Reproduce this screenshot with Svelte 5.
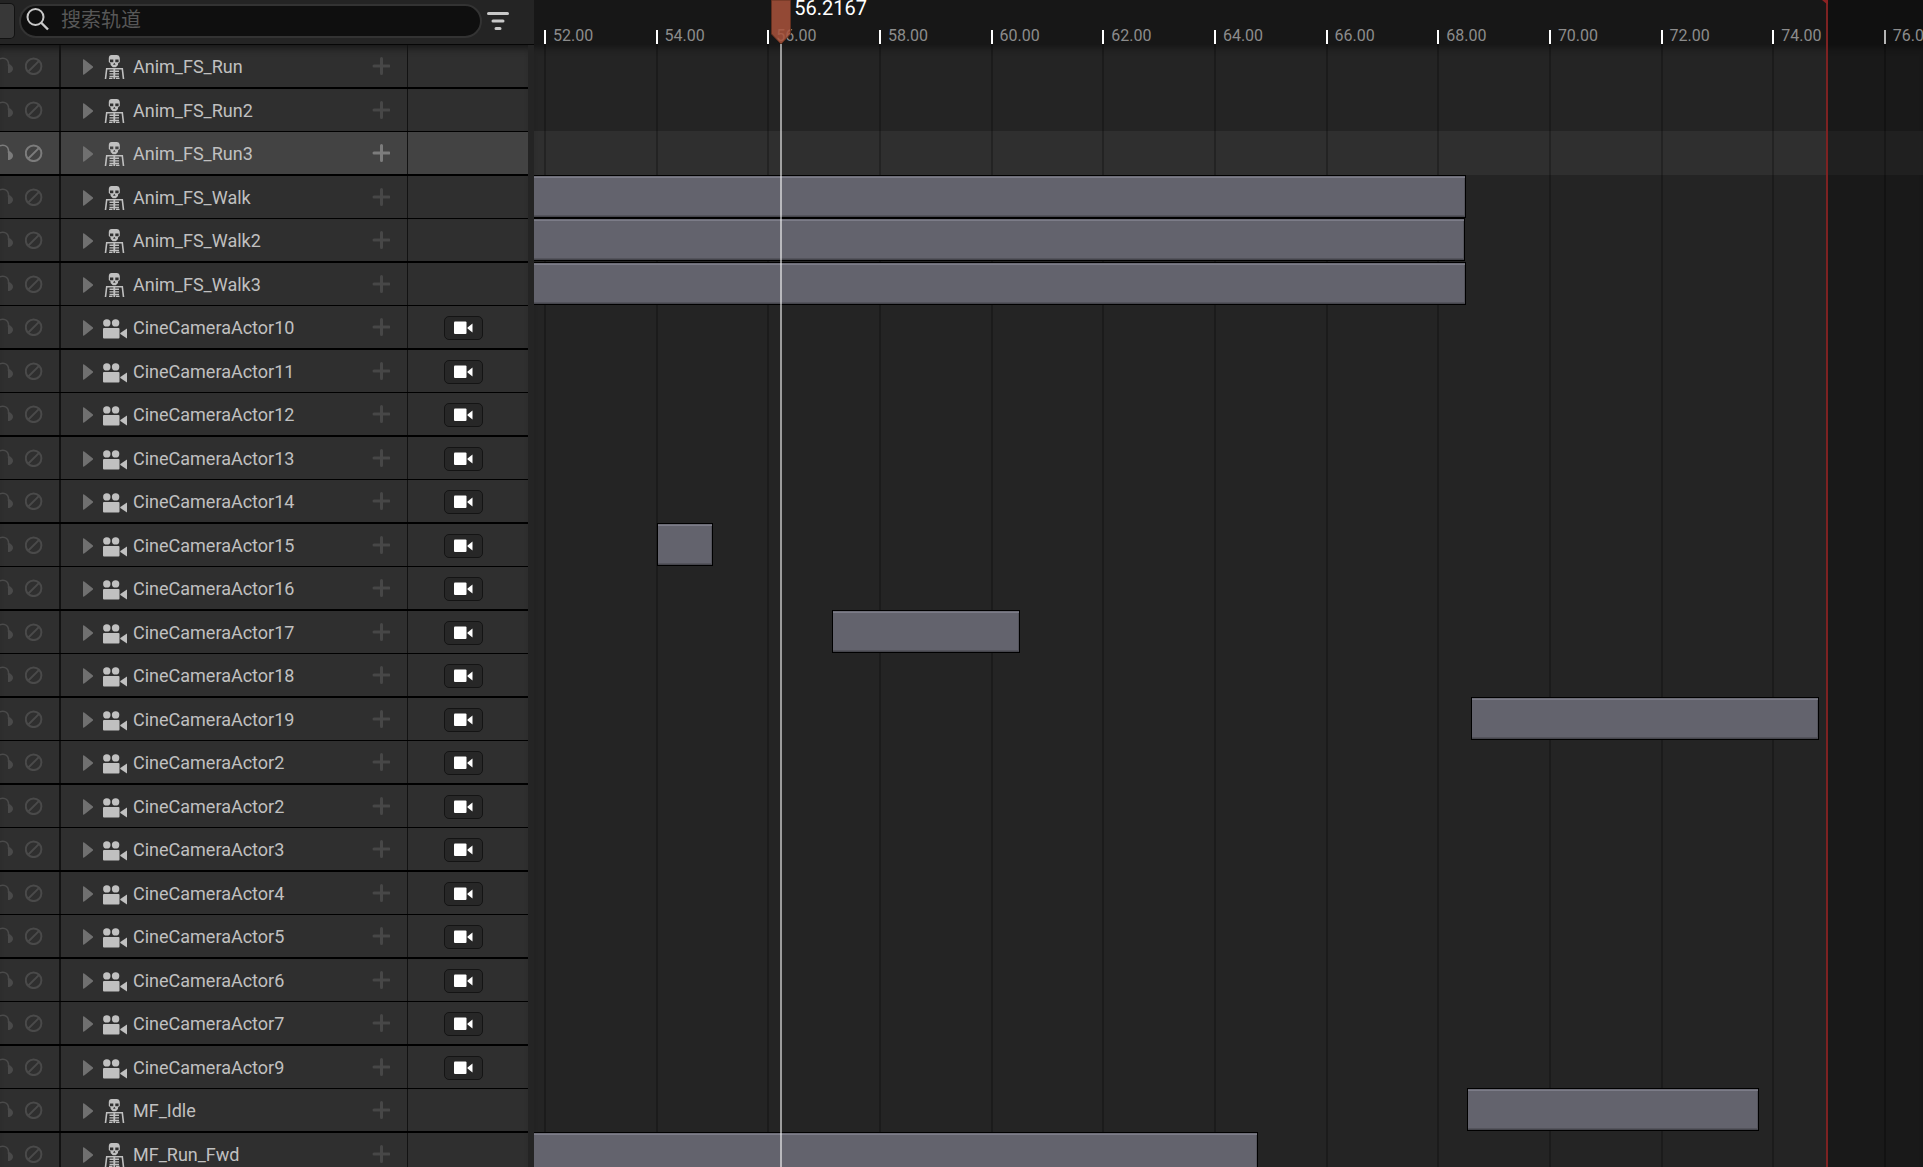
<script>
  const tracks = [
    ...["Anim_FS_Run", "Anim_FS_Run2", "Anim_FS_Run3"].map((name) => ({ name, kind: "anim" })),
    { name: "Anim_FS_Walk", kind: "anim", from: 50, to: 68.52 },
    { name: "Anim_FS_Walk2", kind: "anim", from: 50, to: 68.5 },
    { name: "Anim_FS_Walk3", kind: "anim", from: 50, to: 68.52 },
    { name: "CineCameraActor10", kind: "camera" },
    { name: "CineCameraActor11", kind: "camera" },
    { name: "CineCameraActor12", kind: "camera" },
    { name: "CineCameraActor13", kind: "camera" },
    { name: "CineCameraActor14", kind: "camera" },
    { name: "CineCameraActor15", kind: "camera", from: 54.02, to: 55.03 },
    { name: "CineCameraActor16", kind: "camera" },
    { name: "CineCameraActor17", kind: "camera", from: 57.16, to: 60.53 },
    { name: "CineCameraActor18", kind: "camera" },
    { name: "CineCameraActor19", kind: "camera", from: 68.6, to: 74.84 },
    { name: "CineCameraActor2", kind: "camera" },
    { name: "CineCameraActor2", kind: "camera" },
    { name: "CineCameraActor3", kind: "camera" },
    { name: "CineCameraActor4", kind: "camera" },
    { name: "CineCameraActor5", kind: "camera" },
    { name: "CineCameraActor6", kind: "camera" },
    { name: "CineCameraActor7", kind: "camera" },
    { name: "CineCameraActor9", kind: "camera" },
    { name: "MF_Idle", kind: "anim", from: 68.54, to: 73.76 },
    { name: "MF_Run_Fwd", kind: "anim", from: 50, to: 64.79 },
  ];

  // visible range of the timeline, in seconds
  const viewStart = 51.822;
  const viewSpan = 24.879;
  const rangeEnd = 75;
  const playhead = 56.2167;

  const ticks = [];
  for (let t = 52; t <= 76; t += 2) ticks.push(t);

  let selected = $state(2);
  let query = $state("");

  const pos = (t) => ((t - viewStart) / viewSpan) * 100;
  const clipLeft = (track) => Math.max(pos(track.from), 0);
  const clipWidth = (track) => pos(track.to) - clipLeft(track);
</script>

<div class="sequencer">
  <div class="outliner">
    <div class="toolbar">
      <button class="add-track" aria-label="添加轨道"></button>
      <label class="search">
        <svg width="24" height="24" viewBox="0 0 24 24" fill="none" stroke="#c8c8c8" stroke-width="2">
          <circle cx="9.5" cy="10" r="8" />
          <path d="M15 15.5 L22 22.5" stroke-width="2.4" />
        </svg>
        <input type="text" placeholder="搜索轨道" aria-label="搜索轨道" bind:value={query} />
      </label>
      <button class="filter" aria-label="筛选">
        <svg width="22" height="20" viewBox="0 0 22 20" stroke="#c8c8c8" stroke-width="3" stroke-linecap="round">
          <path d="M1.5 2.5H20.5M6 10H16M9 17.5H13" />
        </svg>
      </button>
    </div>

    <div class="tracks">
      {#each tracks as track, i}
        <div class="track" class:selected={selected === i}>
          <div class="state">
            <svg width="13" height="18" viewBox="0 0 13 18">
              <path d="M-3 4.5C-1 .5 7 -.5 8.5 6V9" fill="none" stroke="currentColor" stroke-width="1.5" />
              <path d="M8 6.5C11 7.5 13 9.5 13 11.5C13 14 11 16 8 16Z" fill="currentColor" />
            </svg>
            <svg width="18" height="18" viewBox="0 0 18 18" fill="none" stroke="currentColor" stroke-width="2">
              <circle cx="8.6" cy="9.3" r="7.8" />
              <path d="M3.4 14.5L13.8 4.1" />
            </svg>
          </div>
          <div class="label">
            <button class="expand" aria-label="展开 {track.name}">
              <svg width="10" height="16" viewBox="0 0 10 16">
                <path d="M0 .5Q.5 0 1.5 .8L10 7.5V8.5L1.5 15.2Q.5 16 0 15.5Z" fill="#707070" />
              </svg>
            </button>
            {#if track.kind === "anim"}
              <svg class="kind" width="26" height="26" viewBox="0 0 26 26" fill="#c0c0c0">
                <path
                  fill-rule="evenodd"
                  d="M8.5 1H14Q16.5 1.2 16.8 4V8L15 9.5V11L12.8 13.2H9.8L7.6 11V9.5L5.8 8V4Q6 1.2 8.5 1ZM7 5.5V8.2H10.3V5.5ZM12.3 5.5V8.2H15.6V5.5ZM11.3 8.8L10 10.8H12.6Z"
                />
                <path d="M3 14H20L21.3 25H19.7L18.6 15.4H4.4L3.3 25H1.7Z" />
                <path d="M10.4 14H12.2V25H10.4ZM6.5 16.6H16V18H6.5ZM6.5 19.2H16V20.6H6.5ZM6.5 21.8H16V23.2H6.5ZM6 23.8H9.5V25H6ZM13 23.8H16.5V25H13Z" />
              </svg>
            {:else}
              <svg class="kind" width="26" height="26" viewBox="0 0 26 26" fill="#c0c0c0">
                <circle cx="3.8" cy="7.9" r="3.7" />
                <circle cx="12.6" cy="7.9" r="3.7" />
                <rect x="0" y="13" width="16.5" height="10.5" rx="1" />
                <path d="M24 13.5V23.5L17.3 19V18Z" />
              </svg>
            {/if}
            <button class="name" onclick={() => (selected = i)}>{track.name}</button>
            <button class="plus" aria-label="添加到 {track.name}">
              <svg width="18" height="18" viewBox="0 0 18 18" stroke="currentColor" stroke-width="3" stroke-linecap="round">
                <path d="M9.5 1.5V16.5M2 9H17" />
              </svg>
            </button>
          </div>
          <div class="actions">
            {#if track.kind === "camera"}
              <button class="lock" aria-label="锁定视口 {track.name}">
                <svg width="20" height="14" viewBox="0 0 20 14" fill="#fff">
                  <rect x="1" y="0.5" width="12.5" height="12.5" rx="1" />
                  <path d="M19.5 2.5V11.5L14.5 7.5V6.5Z" />
                </svg>
              </button>
            {/if}
          </div>
        </div>
      {/each}
    </div>
  </div>

  <div class="timeline">
    <div class="ruler">
      {#each ticks as t}
        <div class="tick" class:beyond={t > rangeEnd} style="left: {pos(t)}%">{t.toFixed(2)}</div>
      {/each}
    </div>

    <div class="lanes">
      {#each tracks as track, i}
        <div class="lane" class:selected={selected === i}></div>
      {/each}
    </div>

    <div class="grid">
      {#each ticks as t}
        <div class="line" style="left: {pos(t)}%"></div>
      {/each}
    </div>

    <div class="clips">
      {#each tracks as track}
        <div class="row">
          {#if track.to}
            <div
              class="clip"
              class:cut={track.from < viewStart}
              style="margin-left: {clipLeft(track)}%; width: {clipWidth(track)}%"
            ></div>
          {/if}
        </div>
      {/each}
    </div>

    <div class="outside" style="left: {pos(rangeEnd)}%"></div>
    <svg class="end-mark" style="left: {pos(rangeEnd)}%" width="6" height="5" viewBox="0 0 6 5">
      <path d="M0 0H6V5Z" fill="#8c2222" />
    </svg>
    <div class="playhead" style="left: {pos(playhead)}%">
      <svg width="20" height="44" viewBox="0 0 20 44">
        <path d="M.5 0H19.5V34L10.5 43.5H9.5L.5 34Z" fill="#a9523b" fill-opacity=".85" stroke="#63301f" />
      </svg>
      <span>{playhead}</span>
    </div>
  </div>
</div>

<style>
  :global(body) {
    margin: 0;
    background: #242424;
  }

  .sequencer {
    display: flex;
    height: 100vh;
    overflow: hidden;
    background: #242424;
    color: #c0c0c0;
    font-family: Roboto, "Noto Sans CJK SC", sans-serif;
    font-size: 18px;
  }

  button {
    margin: 0;
    padding: 0;
    border: 0;
    background: none;
    color: inherit;
    font: inherit;
    cursor: pointer;
  }

  svg {
    display: block;
    flex: none;
  }

  .outliner {
    flex: none;
    width: 534px;
  }

  .toolbar {
    display: flex;
    align-items: center;
    box-sizing: border-box;
    height: 45px;
    padding-bottom: 3px;
    border-bottom: 1px solid #060606;
  }

  .add-track {
    width: 15px;
    height: 36px;
    box-sizing: border-box;
    border: 1px solid #121212;
    border-left: 0;
    border-radius: 0 5px 5px 0;
    background: #383838;
  }

  .search {
    display: flex;
    align-items: center;
    box-sizing: border-box;
    width: 463px;
    height: 34px;
    margin-left: 4px;
    padding: 0 0 4px 5px;
    border: 2px solid #333;
    border-radius: 17px;
    background: #0f0f0f;
  }

  .search input {
    flex: 1;
    min-width: 0;
    margin-left: 11px;
    padding: 0;
    border: 0;
    outline: 0;
    background: none;
    color: #c0c0c0;
    font: 20px/26px "Noto Sans CJK SC", sans-serif;
  }

  .search input::placeholder {
    color: #575757;
    opacity: 1;
  }

  .filter {
    margin-left: 5px;
  }

  .tracks {
    width: 528px;
    background: #2f2f2f;
    box-shadow: inset 0 8px 8px -6px #111;
  }

  .track {
    display: flex;
    height: 42px;
    border-bottom: 1px solid #000;
  }

  .track:nth-child(odd) {
    border-bottom-width: 2px;
  }

  .track.selected {
    background: #434343;
  }

  .state {
    display: flex;
    align-items: center;
    gap: 12px;
    width: 59px;
    border-right: 2px solid #121212;
    color: #4a4a4a;
  }

  .label {
    display: flex;
    flex: 1;
    align-items: center;
    padding-top: 2px;
    border-right: 1px solid #121212;
  }

  .expand {
    margin-left: 22px;
  }

  .kind {
    margin-left: 10px;
  }

  .name {
    flex: 1;
    margin-left: 4px;
    text-align: left;
    line-height: 24px;
  }

  .plus {
    margin-right: 17px;
    padding-bottom: 2px;
    color: #474747;
  }

  .selected .state,
  .selected .plus {
    color: #7c7c7c;
  }

  .actions {
    display: flex;
    align-items: center;
    justify-content: center;
    box-sizing: border-box;
    width: 120px;
    padding: 2px 10px 0 0;
  }

  .lock {
    display: flex;
    align-items: center;
    justify-content: center;
    width: 39px;
    height: 24px;
    box-sizing: border-box;
    border: 1px solid #141414;
    border-radius: 5px;
    background: #272727;
  }

  .timeline {
    position: relative;
    flex: 1;
    overflow: hidden;
  }

  .ruler {
    position: relative;
    height: 44px;
    background: #171717;
  }

  .tick {
    position: absolute;
    bottom: 0;
    z-index: 1;
    height: 14px;
    padding-left: 7px;
    border-left: 2px solid #fff;
    color: #8c8c8c;
    font-size: 16px;
    line-height: 12px;
  }

  .tick.beyond {
    border-color: #b4b4b4;
  }

  .lane,
  .row {
    height: 43px;
  }

  .lane:nth-child(odd),
  .row:nth-child(odd) {
    height: 44px;
  }

  .lane.selected {
    background: #2f2f2f;
  }

  /* layers over the lanes */
  .grid,
  .clips {
    position: absolute;
    inset: 44px 0 0;
  }

  .grid {
    box-shadow: inset 0 8px 8px -6px #111;
  }

  .line {
    position: absolute;
    top: 0;
    bottom: 0;
    width: 2px;
    background: rgba(0, 0, 0, 0.25);
  }

  .clip {
    box-sizing: border-box;
    height: 43px;
    border: 1px solid #000;
    background: #63636d;
    box-shadow: inset 0 1px #6d6d77, inset 0 2px #7c7c88, inset 0 -1px #45454c, inset 0 -2px #54545c,
      inset -1px 0 #54545c;
  }

  .clip.cut {
    border-left: 0;
  }

  .outside {
    position: absolute;
    top: 0;
    right: 0;
    bottom: 0;
    margin-left: -2px;
    border-left: 2px solid #7d2222;
    background: rgba(0, 0, 0, 0.3);
  }

  .end-mark {
    position: absolute;
    top: 0;
    margin-left: -6px;
  }

  .playhead {
    position: absolute;
    top: 0;
    bottom: 0;
    z-index: 2;
    width: 2px;
    margin-left: 1px;
    background: linear-gradient(transparent 44px, rgba(255, 255, 255, 0.55) 44px);
  }

  .playhead svg {
    position: absolute;
    left: -9px;
  }

  .playhead span {
    position: absolute;
    top: 0;
    left: 14px;
    color: #fff;
    font-size: 20px;
    line-height: 16px;
  }
</style>
